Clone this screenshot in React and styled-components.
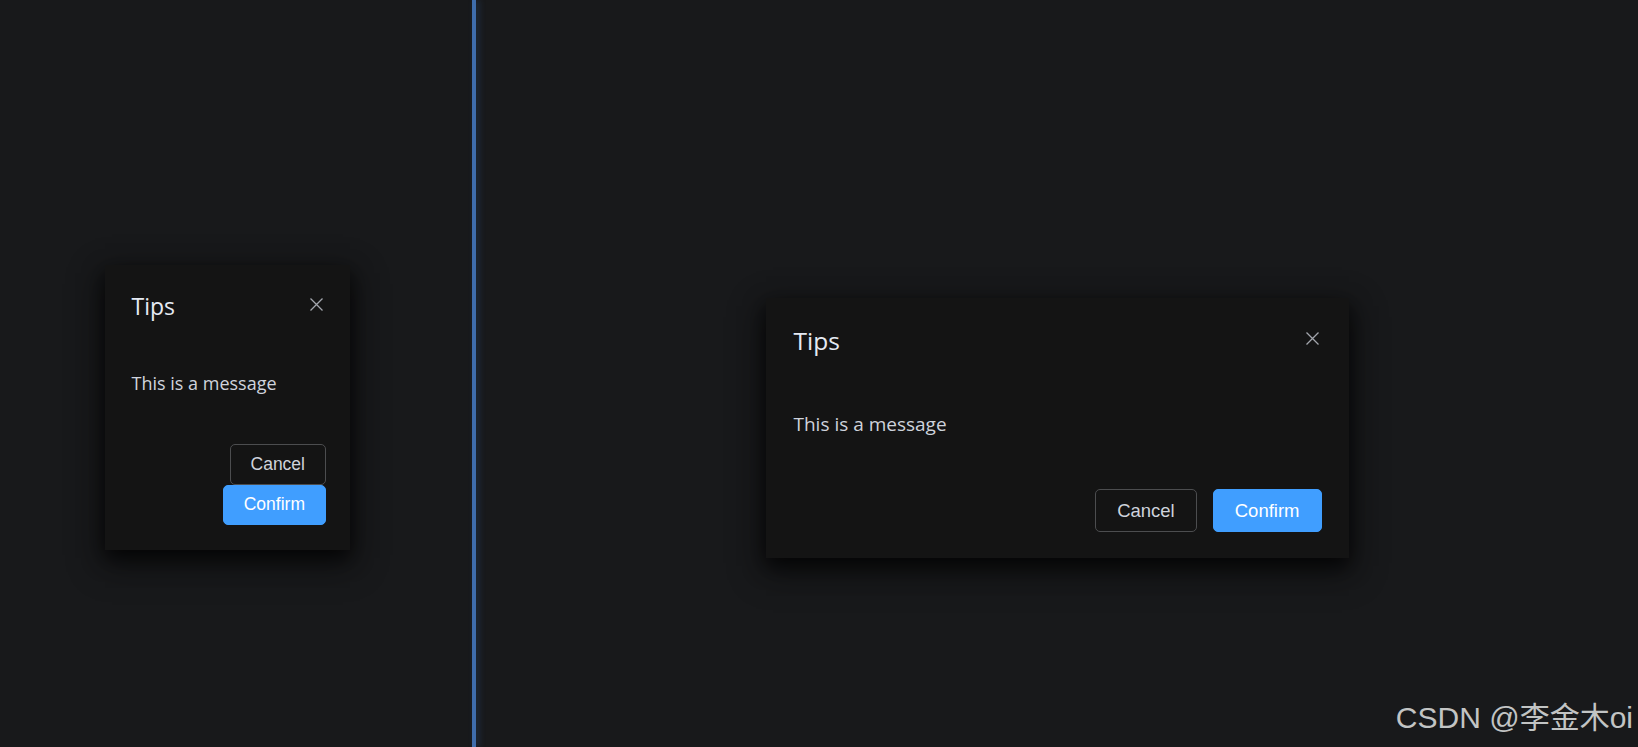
import React from 'react';
import styled, { createGlobalStyle } from 'styled-components';

const GlobalStyle = createGlobalStyle`
  html, body {
    margin: 0;
    padding: 0;
    background: #18191b;
    font-family: "Open Sans", "Noto Sans", sans-serif;
  }
`;

// metrics for the two dialog sizes (right one is the bigger screenshot)
const large = {
  width: 583,
  top: 27,
  padX: 28,
  title: 24.5,
  titleLh: 32,
  bodyTop: 54,
  bodyBottom: 52,
  text: 19,
  textLh: 26,
  footRight: 27,
  footBottom: 26,
  btn: 18.5,
  btnH: 43,
  btnPx: 21,
  btnGap: 16,
  closeTop: 34,
  closeRight: 30,
};

const small = {
  width: 245,
  top: 26,
  padX: 27,
  title: 23,
  titleLh: 30,
  bodyTop: 50,
  bodyBottom: 49,
  text: 18,
  textLh: 24,
  footRight: 24,
  footBottom: 25,
  btn: 17.5,
  btnH: 40.5,
  btnPx: 19.5,
  btnGap: 15,
  closeTop: 33,
  closeRight: 27,
};

const Page = styled.div`
  position: relative;
  display: flex;
  height: 100vh;
  overflow: hidden;
`;

const LeftPane = styled.div`
  width: 472px;
  display: flex;
  justify-content: center;
  align-items: flex-start;
  padding-top: 265px;
  padding-right: 18px;
  box-sizing: border-box;
`;

const Divider = styled.div`
  width: 4px;
  flex-shrink: 0;
  background: #3f6dac;
  box-shadow: 3px 0 6px rgba(50, 90, 150, 0.35);
`;

const RightPane = styled.div`
  flex: 1;
  display: flex;
  justify-content: center;
  align-items: flex-start;
  padding-top: 298px;
`;

const Dialog = styled.div`
  position: relative;
  width: ${p => p.$m.width}px;
  background: #141414;
  box-shadow: 0 12px 32px 4px rgba(0, 0, 0, 0.36), 0 8px 20px rgba(0, 0, 0, 0.72);
  box-sizing: border-box;
`;

const Header = styled.div`
  padding: ${p => p.$m.top}px ${p => p.$m.padX}px 0;
`;

const Title = styled.span`
  display: block;
  font-size: ${p => p.$m.title}px;
  line-height: ${p => p.$m.titleLh}px;
  color: #e5eaf3;
`;

const CloseBtn = styled.button`
  position: absolute;
  top: ${p => p.$m.closeTop}px;
  right: ${p => p.$m.closeRight}px;
  width: 13px;
  height: 13px;
  padding: 0;
  border: none;
  background: none;
  color: #a3a6ad;
  display: flex;
  cursor: pointer;
`;

const Body = styled.div`
  padding: ${p => p.$m.bodyTop}px ${p => p.$m.padX}px ${p => p.$m.bodyBottom}px;
  font-size: ${p => p.$m.text}px;
  line-height: ${p => p.$m.textLh}px;
  color: #cfd3dc;
`;

const Footer = styled.div`
  display: flex;
  flex-wrap: wrap;
  justify-content: flex-end;
  column-gap: ${p => p.$m.btnGap}px;
  padding: 0 ${p => p.$m.footRight}px ${p => p.$m.footBottom}px;
`;

const Button = styled.button`
  height: ${p => p.$m.btnH}px;
  padding: 0 ${p => p.$m.btnPx}px;
  font-family: "Liberation Sans", Arial, sans-serif;
  font-size: ${p => p.$m.btn}px;
  border-radius: 5px;
  box-sizing: border-box;
  cursor: pointer;
  border: 1px solid ${p => (p.$primary ? '#409eff' : '#4c4d4f')};
  background: ${p => (p.$primary ? '#409eff' : 'transparent')};
  color: ${p => (p.$primary ? '#ffffff' : '#cfd3dc')};
`;

const Watermark = styled.div`
  position: absolute;
  right: 5px;
  bottom: 14px;
  font-family: "Liberation Sans", "Noto Sans CJK SC", sans-serif;
  font-size: 30px;
  line-height: 30px;
  color: #c2c4c4;
  white-space: nowrap;
`;

function CloseIcon() {
  return (
    <svg width="13" height="13" viewBox="0 0 13 13" fill="none">
      <path d="M0.5 0.5L12.5 12.5M12.5 0.5L0.5 12.5" stroke="currentColor" strokeWidth="1.3" />
    </svg>
  );
}

function TipsDialog({ m }) {
  return (
    <Dialog $m={m}>
      <Header $m={m}>
        <Title $m={m}>Tips</Title>
      </Header>
      <CloseBtn $m={m} aria-label="Close">
        <CloseIcon />
      </CloseBtn>
      <Body $m={m}>This is a message</Body>
      <Footer $m={m}>
        <Button $m={m}>Cancel</Button>
        <Button $m={m} $primary>Confirm</Button>
      </Footer>
    </Dialog>
  );
}

export default function App() {
  return (
    <>
      <GlobalStyle />
      <Page>
        <LeftPane>
          <TipsDialog m={small} />
        </LeftPane>
        <Divider />
        <RightPane>
          <TipsDialog m={large} />
        </RightPane>
        <Watermark>CSDN @李金木oi</Watermark>
      </Page>
    </>
  );
}
